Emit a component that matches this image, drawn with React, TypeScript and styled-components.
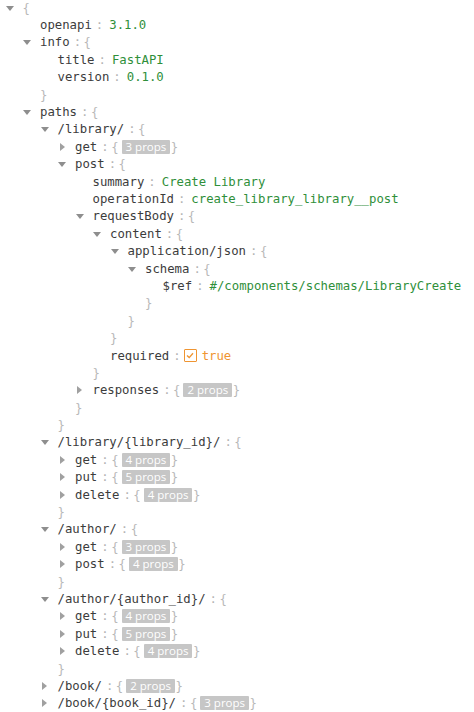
import React from "react";
import styled, { createGlobalStyle } from "styled-components";

const Global = createGlobalStyle`
  html, body { margin: 0; padding: 0; background: #ffffff; }
  body { font-family: "DejaVu Sans Mono", "Liberation Mono", monospace; font-size: 12.3px; }
`;

type JNode = {
  k?: string;
  v?: string | boolean;
  children?: JNode[];
  open?: boolean;
  props?: number;
};

const c = (k: string, props: number): JNode => ({ k, props, open: false });

const data: JNode = {
  open: true,
  children: [
    { k: "openapi", v: "3.1.0" },
    {
      k: "info",
      open: true,
      children: [
        { k: "title", v: "FastAPI" },
        { k: "version", v: "0.1.0" },
      ],
    },
    {
      k: "paths",
      open: true,
      children: [
        {
          k: "/library/",
          open: true,
          children: [
            c("get", 3),
            {
              k: "post",
              open: true,
              children: [
                { k: "summary", v: "Create Library" },
                { k: "operationId", v: "create_library_library__post" },
                {
                  k: "requestBody",
                  open: true,
                  children: [
                    {
                      k: "content",
                      open: true,
                      children: [
                        {
                          k: "application/json",
                          open: true,
                          children: [
                            {
                              k: "schema",
                              open: true,
                              children: [
                                { k: "$ref", v: "#/components/schemas/LibraryCreate" },
                              ],
                            },
                          ],
                        },
                      ],
                    },
                    { k: "required", v: true },
                  ],
                },
                c("responses", 2),
              ],
            },
          ],
        },
        {
          k: "/library/{library_id}/",
          open: true,
          children: [c("get", 4), c("put", 5), c("delete", 4)],
        },
        {
          k: "/author/",
          open: true,
          children: [c("get", 3), c("post", 4)],
        },
        {
          k: "/author/{author_id}/",
          open: true,
          children: [c("get", 4), c("put", 5), c("delete", 4)],
        },
        c("/book/", 2),
        c("/book/{book_id}/", 3),
      ],
    },
  ],
};

const Viewer = styled.div`
  height: 100vh;
  box-sizing: border-box;
  padding: 0 0 0 5px;
  color: #3c3c3c;
  overflow: hidden;
`;

const Tree = styled.div`
  margin-top: -1px;
`;

const Row = styled.div`
  display: flex;
  align-items: center;
  height: 17.4px;
  white-space: pre;
`;

const Toggle = styled.span<{ $state: "open" | "closed" | "none" }>`
  flex: none;
  width: 17.5px;
  height: 100%;
  display: flex;
  align-items: center;
  &::before {
    content: "";
    display: ${(p) => (p.$state === "none" ? "none" : "block")};
    width: 0;
    height: 0;
    ${(p) =>
      p.$state === "open"
        ? `margin-left: 0.5px;
           margin-top: 1px;
           border-left: 4px solid transparent;
           border-right: 4px solid transparent;
           border-top: 5px solid #8e8e8e;`
        : `margin-left: 2px;
           border-top: 4px solid transparent;
           border-bottom: 4px solid transparent;
           border-left: 5px solid #a0a0a0;`}
  }
`;

const Key = styled.span`
  color: #3c3c3c;
`;

const Colon = styled.span`
  color: #b4b4b4;
  margin: 0 2.5px 0 4px;
`;

const Brace = styled.span`
  color: #b8b8b8;
`;

const Str = styled.span`
  color: #2f8f3a;
  margin-left: 3.5px;
`;

const Badge = styled.span`
  display: inline-block;
  height: 14px;
  line-height: 14px;
  padding: 0 4px;
  margin: 0 0.5px 0 3px;
  background: #c6c6c6;
  color: #ffffff;
  font-family: "Open Sans", "Noto Sans", sans-serif;
  font-size: 11.5px;
  border-radius: 1px;
`;

const Bool = styled.span`
  display: inline-flex;
  align-items: center;
  color: #ef9532;
  margin-left: 0.5px;
`;

const Check = styled.span`
  box-sizing: border-box;
  width: 13px;
  height: 13px;
  border: 1.5px solid #ef9532;
  border-radius: 1px;
  display: inline-flex;
  align-items: center;
  justify-content: center;
  margin-right: 5px;
`;

const Children = styled.div`
  margin-left: 17.5px;
`;

function Node({ node }: { node: JNode }) {
  const isObj = node.children !== undefined || node.props !== undefined;
  const head =
    node.k !== undefined ? (
      <>
        <Key>{node.k}</Key>
        <Colon>:</Colon>
      </>
    ) : null;
  if (!isObj) {
    return (
      <Row>
        <Toggle $state="none" />
        {head}
        {typeof node.v === "boolean" ? (
          <Bool>
            <Check>
              <svg width="8" height="7" viewBox="0 0 8 7">
                <path d="M1 3.5 L3.2 5.6 L7 1.2" fill="none" stroke="#ef9532" strokeWidth="1.4" />
              </svg>
            </Check>
            {String(node.v)}
          </Bool>
        ) : (
          <Str>{node.v}</Str>
        )}
      </Row>
    );
  }
  if (!node.open) {
    return (
      <Row>
        <Toggle $state="closed" />
        {head}
        <Brace>{"{"}</Brace>
        <Badge>{node.props} props</Badge>
        <Brace>{"}"}</Brace>
      </Row>
    );
  }
  return (
    <>
      <Row>
        <Toggle $state="open" />
        {head}
        <Brace>{"{"}</Brace>
      </Row>
      <Children>
        {node.children!.map((ch, i) => (
          <Node key={i} node={ch} />
        ))}
      </Children>
      <Row>
        <Toggle $state="none" />
        <Brace>{"}"}</Brace>
      </Row>
    </>
  );
}

export default function App() {
  return (
    <>
      <Global />
      <Viewer>
        <Tree>
          <Node node={data} />
        </Tree>
      </Viewer>
    </>
  );
}
